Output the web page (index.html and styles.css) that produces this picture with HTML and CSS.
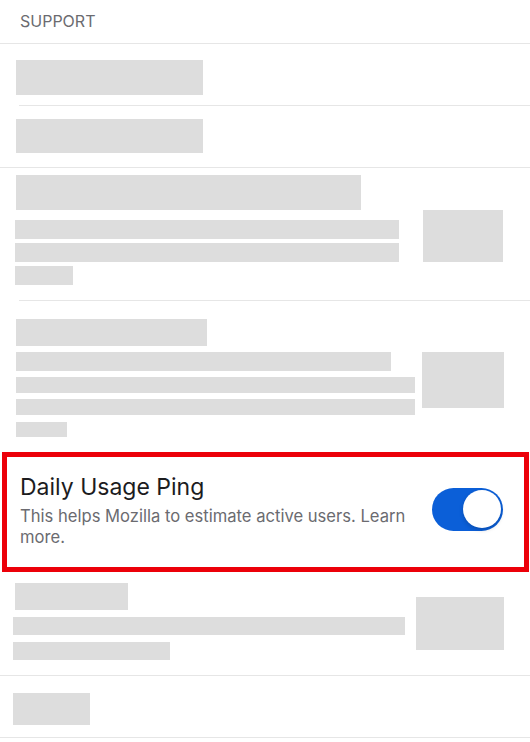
FILE: index.html
```html
<!DOCTYPE html>
<html lang="en">
  <head>
    <meta charset="UTF-8" />
    <meta name="viewport" content="width=device-width, initial-scale=1.0" />
    <title>Settings - Support</title>
    <link rel="stylesheet" href="styles.css">
  </head>
  <body>
    <div class="settings">
      <div class="section-header">SUPPORT</div>

      <div class="row row-link-1">
        <div class="ph ph-link-1"></div>
      </div>
      <div class="divider inset"></div>

      <div class="row row-link-2">
        <div class="ph ph-link-2"></div>
      </div>
      <div class="divider"></div>

      <div class="row row-a">
        <div class="col">
          <div class="ph ph-a-title"></div>
          <div class="ph ph-a-line"></div>
          <div class="ph ph-a-line"></div>
          <div class="ph ph-a-short"></div>
        </div>
        <div class="ph ph-a-switch"></div>
      </div>
      <div class="divider inset"></div>

      <div class="row row-b">
        <div class="col">
          <div class="ph ph-b-title"></div>
          <div class="ph ph-b-line1"></div>
          <div class="ph ph-b-line2"></div>
          <div class="ph ph-b-line2"></div>
          <div class="ph ph-b-short"></div>
        </div>
        <div class="ph ph-b-switch"></div>
      </div>

      <!-- highlighted setting -->
      <div class="row setting highlight">
        <div class="setting-text">
          <div class="setting-title">Daily Usage Ping</div>
          <div class="setting-desc">This helps Mozilla to estimate active users. Learn more.</div>
        </div>
        <div class="toggle on">
          <div class="knob"></div>
        </div>
      </div>

      <div class="row row-c">
        <div class="col">
          <div class="ph ph-c-title"></div>
          <div class="ph ph-c-line1"></div>
          <div class="ph ph-c-line2"></div>
        </div>
        <div class="ph ph-c-switch"></div>
      </div>
      <div class="divider"></div>

      <div class="row row-d">
        <div class="ph ph-d"></div>
      </div>
      <div class="divider"></div>
    </div>
  </body>
</html>
```

FILE: styles.css
```css
body {
  margin: 0;
  background: #fff;
  font-family: Inter, "Noto Sans", sans-serif;
  color: #1c1c1e;
}
.settings {
  width: 530px;
}
.section-header {
  height: 44px;
  box-sizing: border-box;
  padding: 11px 0 0 20px;
  font-size: 16px;
  line-height: 20px;
  color: #6b6b70;
  border-bottom: 1px solid #e6e6e6;
}
.divider {
  height: 1px;
  background: #e6e6e6;
}
.divider.inset {
  margin-left: 19px;
}
.row {
  display: flex;
  align-items: flex-start;
}
.col {
  display: flex;
  flex-direction: column;
}
.ph {
  background: #dddddd;
}

/* plain link rows */
.row-link-1 {
  padding: 16px 0 10px 16px;
}
.ph-link-1 {
  width: 187px;
  height: 35px;
}
.row-link-2 {
  padding: 13px 0 14px 16px;
}
.ph-link-2 {
  width: 187px;
  height: 34px;
}

/* row a */
.row-a {
  padding: 7px 0 15px 15px;
}
.ph-a-title {
  width: 345px;
  height: 35px;
  margin-left: 1px;
  margin-bottom: 10px;
}
.ph-a-line {
  width: 384px;
  height: 19px;
  margin-bottom: 4px;
}
.ph-a-short {
  width: 58px;
  height: 19px;
}
.ph-a-switch {
  width: 80px;
  height: 52px;
  margin: 35px 0 0 24px;
}

/* row b */
.row-b {
  padding: 18px 0 15px 16px;
}
.ph-b-title {
  width: 191px;
  height: 27px;
  margin-bottom: 6px;
}
.ph-b-line1 {
  width: 375px;
  height: 19px;
  margin-bottom: 6px;
}
.ph-b-line2 {
  width: 399px;
  height: 16px;
  margin-bottom: 6px;
}
.ph-b-short {
  width: 51px;
  height: 15px;
  margin-top: 1px;
}
.ph-b-switch {
  width: 82px;
  height: 56px;
  margin: 33px 0 0 7px;
}

/* highlighted setting */
.highlight {
  margin: 0 1px 0 2px;
  border: 5px solid #ec0009;
}
.setting {
  align-items: center;
  padding: 16px 21px 19px 13px;
}
.setting-text {
  flex: 1;
  padding-right: 14px;
}
.setting-title {
  font-size: 23px;
  line-height: 28px;
  color: #1c1c1e;
  margin-bottom: 5px;
}
.setting-desc {
  font-size: 16.6px;
  line-height: 21px;
  color: #6b6b70;
}
.toggle {
  width: 71px;
  height: 43px;
  box-sizing: border-box;
  padding: 3px 2px;
  border-radius: 22px;
  background: #e5e5ea;
  display: flex;
  align-items: center;
  margin-bottom: 3px;
}
.toggle.on {
  background: #0b5fd8;
  justify-content: flex-end;
}
.knob {
  width: 38px;
  height: 38px;
  border-radius: 50%;
  background: #fff;
  box-shadow: 0 2px 4px rgba(0, 0, 0, 0.18);
}

/* row c */
.row-c {
  padding: 11px 0 15px 13px;
}
.ph-c-title {
  width: 113px;
  height: 27px;
  margin-left: 2px;
  margin-bottom: 7px;
}
.ph-c-line1 {
  width: 392px;
  height: 18px;
  margin-bottom: 7px;
}
.ph-c-line2 {
  width: 157px;
  height: 18px;
}
.ph-c-switch {
  width: 88px;
  height: 53px;
  margin: 14px 0 0 11px;
}

/* row d */
.row-d {
  padding: 17px 0 12px 13px;
}
.ph-d {
  width: 77px;
  height: 32px;
}
```
